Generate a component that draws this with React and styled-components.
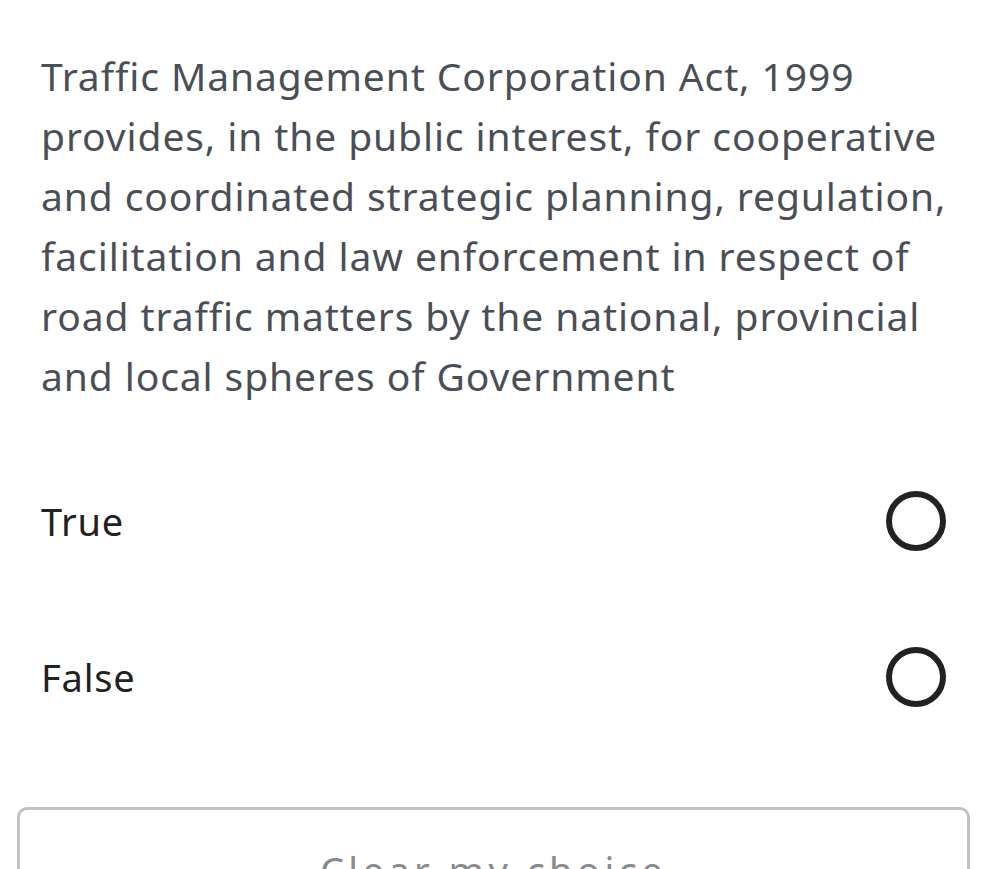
import React, { useState } from 'react';
import styled, { createGlobalStyle } from 'styled-components';

const GlobalStyle = createGlobalStyle`
  body {
    margin: 0;
    background: #ffffff;
    font-family: 'Noto Sans', Roboto, sans-serif;
    overflow: hidden;
  }
`;

const Page = styled.div`
  display: flex;
  flex-direction: column;
  padding: 46px 0 0;
`;

const Question = styled.p`
  margin: 0;
  padding: 0 20px 0 41px;
  font-size: 39px;
  line-height: 60px;
  letter-spacing: 0.9px;
  color: #4a4f57;
  white-space: nowrap;
`;

const Options = styled.div`
  display: flex;
  flex-direction: column;
  margin-top: 37px;
`;

const Option = styled.label`
  display: flex;
  align-items: center;
  justify-content: space-between;
  height: 156px;
  padding: 0 47px 0 41px;
  cursor: pointer;
`;

const OptionText = styled.span`
  font-size: 38px;
  letter-spacing: 0.8px;
  color: #222222;
  margin-top: -1px;
`;

const Radio = styled.span`
  box-sizing: border-box;
  width: 60px;
  height: 60px;
  border-radius: 50%;
  border: 6px solid #222222;
  background: ${({ checked }) => (checked ? 'radial-gradient(circle, #222 0 12px, #fff 13px)' : '#ffffff')};
`;

const ClearButton = styled.button`
  margin: 52px 23px 0 17px;
  height: 110px;
  border: 3px solid #c0c2c6;
  border-radius: 10px;
  background: #ffffff;
  font-family: 'Noto Sans', Roboto, sans-serif;
  font-size: 38px;
  letter-spacing: 4.4px;
  color: #888a8d;
  cursor: pointer;
  padding: 34px 0 0;
  display: flex;
  justify-content: center;
  align-items: flex-start;
`;

const App = () => {
  const [choice, setChoice] = useState(null);

  return (
    <Page>
      <GlobalStyle />
      <Question>
        Traffic Management Corporation Act, 1999<br />
        provides, in the public interest, for cooperative<br />
        and coordinated strategic planning, regulation,<br />
        facilitation and law enforcement in respect of<br />
        road traffic matters by the national, provincial<br />
        and local spheres of Government
      </Question>
      <Options>
        {['True', 'False'].map((opt) => (
          <Option key={opt} onClick={() => setChoice(opt)}>
            <OptionText>{opt}</OptionText>
            <Radio checked={choice === opt} />
          </Option>
        ))}
      </Options>
      <ClearButton onClick={() => setChoice(null)}>Clear my choice</ClearButton>
    </Page>
  );
};

export default App;
